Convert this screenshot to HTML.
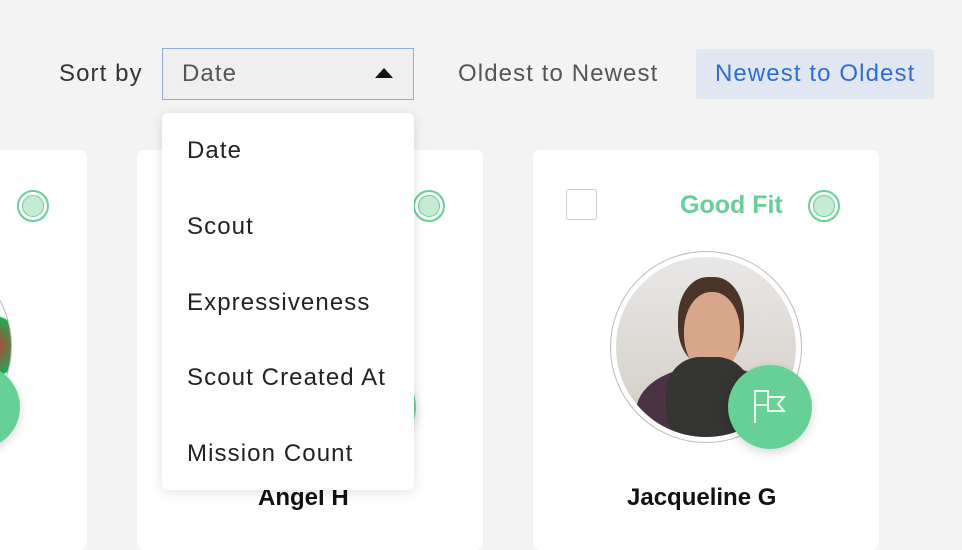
<!DOCTYPE html>
<html><head><style>
body{margin:0;width:962px;height:500px;background:#f3f3f3;font-family:"Liberation Sans",sans-serif;position:relative;overflow:hidden}
.a{position:absolute}
.card{position:absolute;top:150px;width:346px;height:400px;background:#fff;border-radius:7px}
.radio{position:absolute;width:32px;height:32px;border:2px solid #66d095;border-radius:50%;box-sizing:border-box}
.radio:after{content:"";position:absolute;left:3px;top:3px;width:22px;height:22px;border-radius:50%;background:#c3ecd3;border:1px solid #66d095;box-sizing:border-box}
.flag{position:absolute;width:84px;height:84px;border-radius:50%;background:#66d095;box-shadow:0 4px 10px rgba(0,0,0,.15)}
.item{position:absolute;left:25px;font-size:24px;color:#222;letter-spacing:1.1px}
.t{letter-spacing:1.1px}
</style></head><body>
<div class="a t" style="left:59px;top:60px;font-size:24px;color:#333">Sort by</div>
<div class="a" style="left:162px;top:48px;width:252px;height:52px;border:1px solid #8eaedc;box-sizing:border-box;background:#efefef"></div>
<div class="a t" style="left:182px;top:60px;font-size:24px;color:#555">Date</div>
<div class="a" style="left:375px;top:68px;width:0;height:0;border-left:9px solid transparent;border-right:9px solid transparent;border-bottom:10px solid #111"></div>
<div class="a t" style="left:458px;top:60px;font-size:24px;color:#555">Oldest to Newest</div>
<div class="a" style="left:696px;top:49px;width:238px;height:50px;background:#e1e7f2;border-radius:3px"></div>
<div class="a t" style="left:715px;top:60px;font-size:24px;color:#2e6ed2">Newest to Oldest</div>

<div class="card" style="left:-259px"></div>
<div class="radio" style="left:17px;top:190px"></div>
<div class="a" style="left:-180px;top:250px;width:190px;height:190px;border-radius:50%;border:1px solid #bbb;background:radial-gradient(circle at 90% 50%,#c33 0,#2a5 15%,#fff 16%)"></div>
<div class="flag" style="left:-64px;top:365px"></div>

<div class="card" style="left:137px"></div>
<div class="radio" style="left:413px;top:190px"></div>
<div class="flag" style="left:332px;top:365px"></div>
<div class="a" style="left:258px;top:484px;font-size:24px;font-weight:bold;color:#111">Angel H</div>

<div class="card" style="left:533px"></div>
<div class="a" style="left:566px;top:189px;width:31px;height:31px;border:1px solid #ccc;border-radius:3px;box-sizing:border-box"></div>
<div class="a" style="left:680px;top:191px;font-size:25px;font-weight:bold;color:#66d095">Good Fit</div>
<div class="radio" style="left:808px;top:190px"></div>
<div class="a" style="left:610px;top:251px;width:192px;height:192px;border-radius:50%;border:1px solid #bbb;box-sizing:border-box;padding:5px">
<div style="width:180px;height:180px;border-radius:50%;overflow:hidden;position:relative;background:linear-gradient(#e9e7e6,#dcd9d4 55%,#cfcac0)">
<div class="a" style="left:62px;top:20px;width:66px;height:90px;border-radius:45%;background:#4a3528"></div>
<div class="a" style="left:68px;top:35px;width:56px;height:82px;border-radius:48%;background:#d8a68a"></div>
<div class="a" style="left:20px;top:110px;width:150px;height:100px;border-radius:45% 45% 0 0;background:#4b3346"></div>
<div class="a" style="left:50px;top:100px;width:85px;height:90px;border-radius:40%;background:#343433"></div>
</div></div>
<div class="flag" style="left:728px;top:365px"><svg width="84" height="84" viewBox="0 0 84 84" style="position:absolute;left:0;top:0"><path d="M27 58V26h13v6h16l-6 7 6 7H40v-6H27" fill="none" stroke="#fff" stroke-width="1.8"/><path d="M40 26v14" stroke="#fff" stroke-width="1.8"/></svg></div>
<div class="a" style="left:627px;top:484px;font-size:24px;font-weight:bold;color:#111">Jacqueline G</div>

<div class="a" style="left:162px;top:113px;width:252px;height:377px;background:#fff;border-radius:6px;box-shadow:0 2px 12px rgba(0,0,0,.12)">
<div class="item" style="top:24px">Date</div>
<div class="item" style="top:100px">Scout</div>
<div class="item" style="top:176px">Expressiveness</div>
<div class="item" style="top:251px">Scout Created At</div>
<div class="item" style="top:327px">Mission Count</div>
</div>
</body></html>
